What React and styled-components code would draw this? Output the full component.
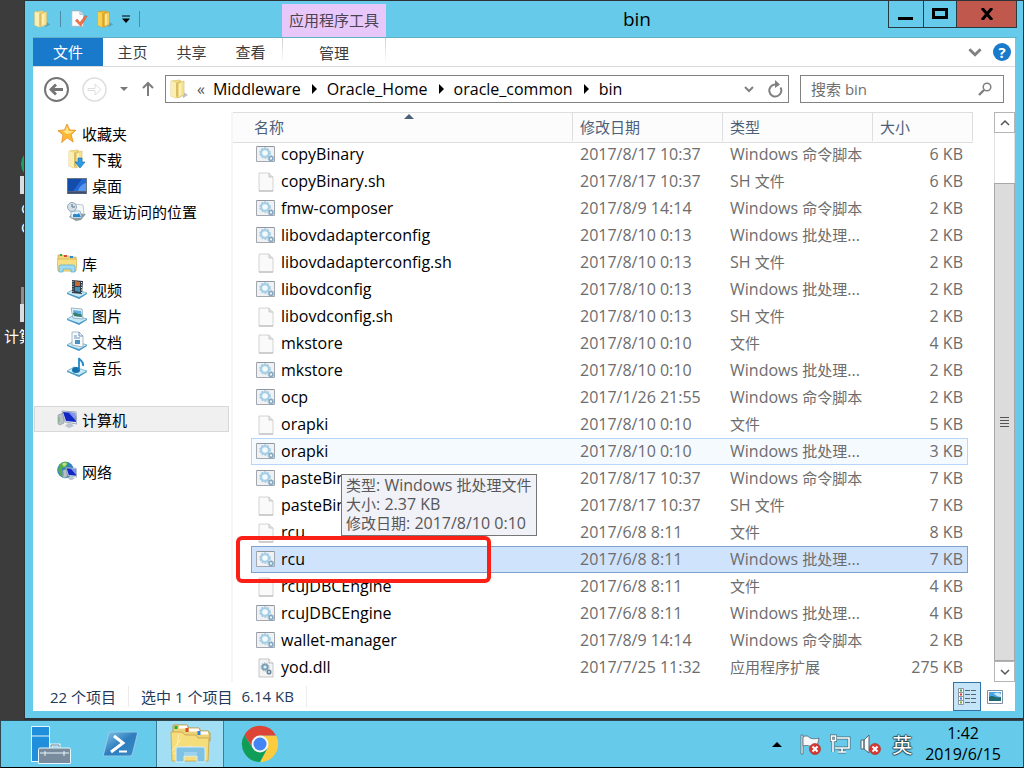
import React from "react";
import styled, { createGlobalStyle, css } from "styled-components";

const files = [
    ["copyBinary", "2017/8/17 10:37", "Windows 命令脚本", "6 KB", "script"],
    ["copyBinary.sh", "2017/8/17 10:37", "SH 文件", "6 KB", "file"],
    ["fmw-composer", "2017/8/9 14:14", "Windows 命令脚本", "2 KB", "script"],
    ["libovdadapterconfig", "2017/8/10 0:13", "Windows 批处理...", "2 KB", "script"],
    ["libovdadapterconfig.sh", "2017/8/10 0:13", "SH 文件", "2 KB", "file"],
    ["libovdconfig", "2017/8/10 0:13", "Windows 批处理...", "2 KB", "script"],
    ["libovdconfig.sh", "2017/8/10 0:13", "SH 文件", "2 KB", "file"],
    ["mkstore", "2017/8/10 0:10", "文件", "4 KB", "file"],
    ["mkstore", "2017/8/10 0:10", "Windows 批处理...", "2 KB", "script"],
    ["ocp", "2017/1/26 21:55", "Windows 命令脚本", "2 KB", "script"],
    ["orapki", "2017/8/10 0:10", "文件", "5 KB", "file"],
    ["orapki", "2017/8/10 0:10", "Windows 批处理...", "3 KB", "script", "hover"],
    ["pasteBinary", "2017/8/17 10:37", "Windows 命令脚本", "7 KB", "script"],
    ["pasteBinary.sh", "2017/8/17 10:37", "SH 文件", "7 KB", "file"],
    ["rcu", "2017/6/8 8:11", "文件", "8 KB", "file"],
    ["rcu", "2017/6/8 8:11", "Windows 批处理...", "7 KB", "script", "selected"],
    ["rcuJDBCEngine", "2017/6/8 8:11", "文件", "4 KB", "file"],
    ["rcuJDBCEngine", "2017/6/8 8:11", "Windows 批处理...", "4 KB", "script"],
    ["wallet-manager", "2017/8/9 14:14", "Windows 命令脚本", "2 KB", "script"],
    ["yod.dll", "2017/7/25 11:32", "应用程序扩展", "275 KB", "dll"],
];

const places = [
    { name: "收藏夹", icon: "star", items: [["下载", "download"], ["桌面", "desktop"], ["最近访问的位置", "recent"]] },
    { name: "库", icon: "library", items: [["视频", "video"], ["图片", "picture"], ["文档", "document"], ["音乐", "music"]] },
    { name: "计算机", icon: "computer", items: [], active: true },
    { name: "网络", icon: "network", items: [] },
];

const crumbs = ["Middleware", "Oracle_Home", "oracle_common", "bin"];

// Chinese runs are set one pixel smaller than the Latin text beside them
function Mixed({ children }) {
    return children
        .split(/([\u4e00-\u9fff]+)/)
        .map((part, i) => (i % 2 ? <Han key={i}>{part}</Han> : part));
}

function FolderArt({ shadow = true, strong }) {
    return (
        <>
            {shadow && <path d="M13 12l6 4-5 3z" fill="#506070" opacity=".4" />}
            <path d="M2 2l9-1 1 1v15l-5 2-5-2z" fill={strong ? "#f0bd35" : "#f3dd8b"} stroke={strong ? "#d19a1c" : "#dcc069"} strokeWidth=".7" />
            <path d="M2 2l5 2v15l-5-2z" fill={strong ? "#f7d154" : "#faeeb2"} />
            <path d="M7 4l4-2v14l-4 2z" fill={strong ? "#dba92d" : "#d9bd66"} />
            <path d="M9 4l6-2v14l-6 3z" fill={strong ? "#f5cd58" : "#f6e294"} stroke={strong ? "#d19a1c" : "#dcc069"} strokeWidth=".7" />
            <path d="M10 5l2-1v12l-2 1z" fill="#fff6bf" opacity=".7" />
        </>
    );
}

const TrayArt = ({ children }) => (
    <>
        <path d="M0 14l7-4 13 4-8 5z" fill="#c6e9f8" stroke="#69acd0" strokeWidth=".8" />
        <path d="M0 14v1l12 5 8-5v-1l-8 4z" fill="#4c9ac4" />
        {children}
    </>
);

const Monitor = () => (
    <>
        <path d="M1 6l5-2 1 10-4 2-2-1z" fill="#b6bfc4" stroke="#89939a" strokeWidth=".6" />
        <path d="M2 8v5" stroke="#72b55f" />
        <path d="M5 2l14 1 1 12-12-2z" fill="#e4eaf0" stroke="#8c98a8" strokeWidth=".8" />
        <path d="M6 3l12 1 1 9-10-1z" fill="#1226c4" />
        <path d="M12 4l6 0 1 8z" fill="#7e96ef" />
        <path d="M11 14l4 1 2 2-5 2-4-2z" fill="#bcc5ce" />
    </>
);

const art = {
    star: (
        <>
            <path d="M10 1l2.8 6 6 .3-4.600 4.300 2 7.500-6-4.300-5.500 4.700 1.300-7.800L1 7.700l6.500-.8z" fill="#fdb933" stroke="#e98a22" strokeWidth=".8" />
            <path d="M10 3l1.600 5 5 .3-6 3-5-3.200 3-.6z" fill="#ffe88c" />
        </>
    ),
    download: (
        <>
            <FolderArt shadow={false} />
            <path d="M11 9h4v4h3l-5 6-5-6h3z" fill="#2d9be4" stroke="#1975bb" strokeWidth=".7" />
        </>
    ),
    desktop: (
        <>
            <path d="M0 3h20v16H0z" fill="#687584" />
            <path d="M1 4h18v12H1z" fill="#2367d2" />
            <path d="M1 4h14L6 16H1z" fill="#144cac" />
            <path d="M11 16c1-4 4-7 8-8v8z" fill="#5797ef" />
            <path d="M1 17.500h18" stroke="#3c4d70" strokeWidth="2" />
        </>
    ),
    recent: (
        <>
            <path d="M2 16l4-4 13 1-5 6-5 1z" fill="#8e989e" />
            <path d="M8 3l8 1 1 9-9-1z" fill="#f4f7f9" stroke="#b1bdc7" strokeWidth=".8" />
            <path d="M4 10l9 0 2 7H4z" fill="#e7f2fa" stroke="#8ca6b6" strokeWidth=".8" />
            <path d="M6 14c2-3 3 1 6-2l2 4H6z" fill="#2488cb" />
            <circle cx="5" cy="6" r="4.500" fill="#d3dee7" stroke="#97aaba" />
            <path d="M5 3v3h3" stroke="#5a7184" fill="none" />
        </>
    ),
    library: (
        <>
            <path d="M1 4V2h5l1 1h5l1 1h6v4H1z" fill="#efd57d" stroke="#c2a042" strokeWidth=".6" />
            <path d="M3 2h2" stroke="#31a64b" strokeWidth="2" />
            <path d="M7 3h3" stroke="#d84b38" strokeWidth="2" />
            <path d="M13 4h3" stroke="#3087d2" strokeWidth="2" />
            <path d="M0 6h20l-1 12H1z" fill="#f6df82" stroke="#d4b552" strokeWidth=".8" />
            <path d="M2 19v-5q0-2 2-2h12q2 0 2 2v5h-4v-3H6v3z" fill="#a1dbf3" stroke="#55a9d2" strokeWidth=".7" />
        </>
    ),
    video: (
        <TrayArt>
            <path d="M5 1l11 1-1 13-10-1z" fill="#313d46" />
            <path d="M8 2l5 1v4H8z" fill="#c56b37" />
            <path d="M8 8l5 0v5l-5-1z" fill="#4592bd" />
            <path d="M6 2v11M14.500 3v11" stroke="#dce8ed" strokeDasharray="1 1.500" />
        </TrayArt>
    ),
    picture: (
        <TrayArt>
            <path d="M4 3l11 1 1 10-10-1z" fill="#eaf3f8" stroke="#83a7bb" strokeWidth=".8" />
            <path d="M6 5l8 1 1 6-8-1z" fill="#5eaee4" />
            <path d="M6 8c3-2 4 2 8 1l1 3-8-1z" fill="#357f6a" />
        </TrayArt>
    ),
    document: (
        <TrayArt>
            <path d="M5 1h7l4 4v11L5 14z" fill="#f7fafd" stroke="#9ba9b6" strokeWidth=".8" />
            <path d="M12 1v4h4M7 5h3M7 7h6" stroke="#6d91bb" fill="none" />
            <path d="M8 9l5 0v4H8z" fill="#4a91c8" />
        </TrayArt>
    ),
    music: (
        <TrayArt>
            <ellipse cx="9" cy="13" rx="4" ry="3" fill="#1670ab" />
            <path d="M12 13V1c1 3 5 3 4 8" stroke="#2589c7" strokeWidth="1.800" fill="none" />
        </TrayArt>
    ),
    computer: <Monitor />,
    network: (
        <>
            <circle cx="8.500" cy="9" r="8.300" fill="#3286bf" />
            <path d="M2 5c3-5 7-5 9-3L9 6l-4 1v5l2 4C3 15 0 10 2 5z" fill="#54ad45" />
            <path d="M5 3c2-2 4-1 5 0L7 6z" fill="#bbe18a" />
            <g transform="translate(5 5) scale(.75)">
                <Monitor />
            </g>
        </>
    ),
    folder: <FolderArt />,
    newFolder: <FolderArt strong />,
    properties: (
        <>
            <path d="M2 1h9l4 4v13H2z" fill="#fbfcfd" stroke="#a7b0b8" strokeWidth=".8" />
            <path d="M11 1v4h4" fill="#dce3e8" stroke="#a7b0b8" strokeWidth=".8" />
            <path d="M6 12l2-2 3 4 6-8 2 1-7 11z" fill="#ee7147" stroke="#c94b2b" strokeWidth=".5" />
        </>
    ),
    file: (
        <>
            <path d="M3 1h10l4 4v14H3z" fill="#fafafa" stroke="#c9c9c9" strokeWidth=".8" />
            <path d="M13 1v4h4" fill="#e6e6e6" stroke="#bcbcbc" strokeWidth=".8" />
            <path d="M3 19h14" stroke="#b4b4b4" />
        </>
    ),
    script: (
        <>
            <path d="M.5 1.500h18v15H.5z" fill="#f0f1f4" stroke="#a3a8ae" strokeWidth="1" />
            <path d="M1 1.500h17" stroke="#8f969d" />
            <circle cx="9" cy="8" r="3.800" fill="#f3fafd" stroke="#a3cfe6" strokeWidth="2" />
            <circle cx="9" cy="8" r="5.200" fill="none" stroke="#86b9d6" strokeWidth="1" strokeDasharray="1.800 1.500" />
            <circle cx="15" cy="13.500" r="1.900" fill="#e8f6fc" stroke="#84a8c3" strokeWidth="1.500" />
            <circle cx="15" cy="13.500" r="3" fill="none" stroke="#84a8c3" strokeWidth=".8" strokeDasharray="1 1" />
        </>
    ),
    dll: (
        <>
            <path d="M3 1h10l4 4v14H3z" fill="#f4f4f4" stroke="#b9b9b9" strokeWidth=".8" />
            <path d="M13 1v4h4" fill="#fff" stroke="#aaa" strokeWidth=".8" />
            <circle cx="9" cy="9" r="2.600" fill="#e4f2f8" stroke="#7c9fb8" strokeWidth="2" />
            <circle cx="9" cy="9" r="4" fill="none" stroke="#7c9fb8" strokeDasharray="1.300 1.200" />
            <circle cx="13" cy="14" r="1.800" fill="#d8e6ee" stroke="#6a859c" strokeWidth="1.500" />
        </>
    ),
};

function Icon({ name, size = 20 }) {
    return (
        <svg width={size} height={size} viewBox="0 0 20 20" aria-hidden="true">
            {art[name]}
        </svg>
    );
}

const Chevron = ({ up, size = 10, width = 2 }) => (
    <svg width={size} height={size} viewBox="0 0 10 10" fill="none" stroke="currentColor" strokeWidth={width} aria-hidden="true">
        <path d={up ? "M1 7l4-4 4 4" : "M1 3l4 4 4-4"} />
    </svg>
);

const Caret = ({ right, up, color = "currentColor" }) => (
    <svg width="10" height="10" viewBox="0 0 10 10" fill={color} aria-hidden="true">
        <path d={right ? "M3 0l5 5-5 5z" : up ? "M0 8l5-5 5 5z" : "M1 3h8L5 7z"} />
    </svg>
);

const Cross = () => (
    <>
        <circle cx="15" cy="15" r="5.500" fill="#d83a32" stroke="#a92822" strokeWidth=".6" />
        <path d="M12.500 12.500l5 5M17.500 12.500l-5 5" stroke="#fff" strokeWidth="2" />
    </>
);

function TitleBar() {
    return (
        <TitleRow>
            <QuickAccess>
                <Icon name="folder" size={18} />
                <Divider />
                <ToolButton aria-label="属性"><Icon name="properties" size={18} /></ToolButton>
                <ToolButton aria-label="新建文件夹"><Icon name="newFolder" size={18} /></ToolButton>
                <ToolButton aria-label="自定义快速访问工具栏">
                    <svg width="8" height="8" viewBox="0 0 8 8">
                        <path d="M0 1h8" stroke="#000" />
                        <path d="M0 3.500h8L4 8z" fill="#000" />
                    </svg>
                </ToolButton>
                <Divider />
            </QuickAccess>
            <ContextTitle>应用程序工具</ContextTitle>
            <Title>bin</Title>
            <WindowButton aria-label="最小化" $width={36}>
                <svg width="16" height="14"><path d="M0 11.500h15" stroke="#000" strokeWidth="3" /></svg>
            </WindowButton>
            <WindowButton aria-label="最大化" $width={33}>
                <svg width="16" height="14"><path d="M1.500 2.500h13v8h-13z" stroke="#000" strokeWidth="3" fill="none" /></svg>
            </WindowButton>
            <WindowButton aria-label="关闭" $width={60} $close>
                <svg width="14" height="12"><path d="M2 0l10 12M12 0L2 12" stroke="#000" strokeWidth="3" /></svg>
            </WindowButton>
        </TitleRow>
    );
}

function Ribbon() {
    return (
        <RibbonRow>
            <FileTab>文件</FileTab>
            <Tab>主页</Tab>
            <Tab>共享</Tab>
            <Tab>查看</Tab>
            <ContextTab>管理</ContextTab>
            <RibbonEnd>
                <ToolButton aria-label="展开功能区"><Chevron size={14} width={2} /></ToolButton>
                <Help aria-label="帮助">?</Help>
            </RibbonEnd>
        </RibbonRow>
    );
}

function AddressRow() {
    return (
        <Address>
            <ToolButton aria-label="后退">
                <svg width="27" height="27" viewBox="0 0 27 27" fill="none" stroke="#757575" strokeWidth="2">
                    <circle cx="13.500" cy="13.500" r="11.500" />
                    <path d="M20 13.500H9M13 8.500l-5 5 5 5" strokeWidth="2.800" />
                </svg>
            </ToolButton>
            <ToolButton aria-label="前进">
                <svg width="27" height="27" viewBox="0 0 27 27" fill="none" stroke="#dedede" strokeWidth="1.500">
                    <circle cx="13.500" cy="13.500" r="11.500" />
                    <path d="M7 12.500h7V8l6 5.500-6 5.500v-4.500H7z" strokeWidth="1" />
                </svg>
            </ToolButton>
            <ToolButton aria-label="最近浏览的位置"><Caret color="#777" /></ToolButton>
            <ToolButton aria-label="上移">
                <svg width="14" height="16" viewBox="0 0 14 16" fill="none" stroke="#7d7d7d" strokeWidth="2">
                    <path d="M8 15V2M3 7l5-5 5 5" />
                </svg>
            </ToolButton>
            <PathBox>
                <Icon name="folder" />
                <Overflow>«</Overflow>
                {crumbs.map((crumb, i) => (
                    <React.Fragment key={crumb}>
                        {i > 0 && <Caret right color="#000" />}
                        <Crumb href="#">{crumb}</Crumb>
                    </React.Fragment>
                ))}
                <PathEnd>
                    <ToolButton aria-label="以前的位置"><Chevron /></ToolButton>
                    <ToolButton aria-label="刷新">
                        <svg width="16" height="18" viewBox="0 0 16 18" fill="none" stroke="#808080" strokeWidth="2">
                            <path d="M13.500 7.500a6 6 0 1 1-5.500-3" />
                            <path d="M8 0l5 4.500L8 8z" fill="#808080" stroke="none" />
                        </svg>
                    </ToolButton>
                </PathEnd>
            </PathBox>
            <SearchBox>
                <SearchInput aria-label="搜索 bin" placeholder="搜索 bin" />
                <svg width="14" height="14" viewBox="0 0 14 14" fill="none" stroke="#808080">
                    <circle cx="9" cy="5" r="3.800" strokeWidth="1.500" />
                    <path d="M6 8l-5 5" strokeWidth="2.400" />
                </svg>
            </SearchBox>
        </Address>
    );
}

function Sidebar() {
    return (
        <SideNav>
            {places.map((group) => (
                <Group key={group.name}>
                    <Place href="#" $active={group.active}>
                        <Icon name={group.icon} />
                        {group.name}
                    </Place>
                    {group.items.map(([name, icon]) => (
                        <Place key={name} href="#" $child>
                            <Icon name={icon} />
                            {name}
                        </Place>
                    ))}
                </Group>
            ))}
        </SideNav>
    );
}

function FileList() {
    return (
        <Table>
            <thead>
                <HeadRow>
                    <Head>
                        名称
                        <SortMark><Caret up color="#4c607a" /></SortMark>
                    </Head>
                    <Head>修改日期</Head>
                    <Head>类型</Head>
                    <Head>大小</Head>
                </HeadRow>
            </thead>
            <tbody>
                {files.map(([name, date, type, size, icon, state], i) => (
                    <Row key={i} $state={state}>
                        <NameCell>
                            <Icon name={icon} />
                            {name}
                            {state === "hover" && (
                                <Tooltip role="tooltip">
                                    <div><Mixed>类型: Windows 批处理文件</Mixed></div>
                                    <div><Mixed>大小: 2.37 KB</Mixed></div>
                                    <div><Mixed>修改日期: 2017/8/10 0:10</Mixed></div>
                                </Tooltip>
                            )}
                            {state === "selected" && <Marker />}
                        </NameCell>
                        <Cell>{date}</Cell>
                        <Cell><Mixed>{type}</Mixed></Cell>
                        <SizeCell>{size}</SizeCell>
                    </Row>
                ))}
            </tbody>
        </Table>
    );
}

function ScrollBar() {
    return (
        <Scroll>
            <ScrollButton aria-label="向上滚动"><Chevron up width={1.5} /></ScrollButton>
            <Thumb>
                <svg width="9" height="10"><path d="M0 .5h9M0 3.500h9M0 6.500h9M0 9.500h9" stroke="#555" /></svg>
            </Thumb>
            <ScrollButton aria-label="向下滚动"><Chevron width={1.5} /></ScrollButton>
        </Scroll>
    );
}

function StatusBar() {
    return (
        <Status>
            <StatusText>
                <span><Mixed>22 个项目</Mixed></span>
            </StatusText>
            <StatusText>
                <span><Mixed>选中 1 个项目</Mixed></span>
                <span>6.14 KB</span>
            </StatusText>
            <Views>
                <ViewButton aria-label="详细信息" $on>
                    <svg width="20" height="18">
                        <path d="M1.500.5h5v16h-5zM1.500 4.500h5M1.500 8.500h5M1.500 12.500h5" fill="#fff" stroke="#8a97a3" />
                        <path d="M3 2.500h2" stroke="#3b9a4b" strokeWidth="2" />
                        <path d="M3 6.500h2" stroke="#d33" strokeWidth="2" />
                        <path d="M3 10.500h2" stroke="#3678d8" strokeWidth="2" />
                        <path d="M3 14.500h2" stroke="#78a92d" strokeWidth="2" />
                        <path d="M8 2.500h11M8 6.500h11M8 10.500h11M8 14.500h11" stroke="#4f6475" strokeDasharray="5 1" />
                    </svg>
                </ViewButton>
                <ViewButton aria-label="大缩略图">
                    <svg width="16" height="14">
                        <path d="M.5.5h15v13H.5z" fill="#fff" stroke="#7c8fa0" />
                        <path d="M2 2h12v9H2z" fill="#4aa4e6" />
                        <path d="M2 7c4-3 7 2 12 0v4H2z" fill="#1f6b70" />
                        <path d="M7 4c2-2 5-1 7 0v3c-3 0-5-2-7-3z" fill="#c9e9fb" />
                    </svg>
                </ViewButton>
            </Views>
        </Status>
    );
}

function Taskbar() {
    return (
        <Bar>
            <Task aria-label="服务器管理器">
                <svg width="42" height="42" viewBox="0 0 42 42" stroke="#e8f6fd">
                    <path d="M2.500 3.500h18v35h-18z" fill="#1f8fdc" />
                    <path d="M2.500 13h18" />
                    <path d="M22 26v-4h8v4" fill="none" stroke="#e8f6fd" strokeWidth="3" />
                    <path d="M22 26v-4h8v4" fill="none" stroke="#6f8793" />
                    <path d="M9.500 26.500q0-1.500 1.500-1.500h29q1.500 0 1.500 1.500v14h-32z" fill="#788c9e" />
                    <path d="M11 30h29M16 28v5M35 28v5" />
                </svg>
            </Task>
            <Task aria-label="PowerShell">
                <svg width="38" height="30" viewBox="0 0 38 30">
                    <defs>
                        <linearGradient id="ps" x1="0" y1="0" x2="1" y2="1">
                            <stop offset="0" stopColor="#86c7e8" />
                            <stop offset=".5" stopColor="#2e7dbd" />
                            <stop offset="1" stopColor="#3a8ac8" />
                        </linearGradient>
                    </defs>
                    <path d="M9 3h26q2 0 1.500 2l-5 20q-.5 2-2.500 2H4q-2 0-1.500-2l5-20q.5-2 2.500-2z" fill="url(#ps)" stroke="#8cc9ea" strokeWidth="1.200" />
                    <path d="M13 7l9 7-12 9" fill="none" stroke="#fff" strokeWidth="3" />
                    <path d="M18 22.500h8" stroke="#fff" strokeWidth="2" />
                </svg>
            </Task>
            <Task aria-label="文件资源管理器" $on>
                <svg width="42" height="40" viewBox="0 0 42 40">
                    <path d="M4 12V2q0-1 1-1h13l2 3h10l2 3h7l2 2v8z" fill="#ecd277" stroke="#b99a49" />
                    <path d="M10 3h8M20 6h10M31 9h8" stroke="#fff" strokeWidth="3" />
                    <path d="M7 2v3" stroke="#28a745" strokeWidth="3" />
                    <path d="M18 4v4" stroke="#de4a2c" strokeWidth="3" />
                    <path d="M30 7v4" stroke="#2f83d6" strokeWidth="3" />
                    <path d="M2 8h11l3 3h11l2 3h11l-1 23H3z" fill="#f6dd7b" stroke="#cfae55" />
                    <path d="M3 27l9-12M4 30l18-8M8 22l2-12" stroke="#fff6c4" opacity=".8" />
                    <path d="M7 38V25q0-2 2-2h25q2 0 2 2v13h-8v-6H15v6z" fill="#7fc2e4" stroke="#d6effa" />
                    <path d="M15 32h13v-4H15z" fill="#a8d9ef" opacity=".7" />
                </svg>
            </Task>
            <Task aria-label="Google Chrome">
                <svg width="38" height="38" viewBox="0 0 38 38">
                    <path d="M19 10.500h16A18 18 0 0 1 19 37l7.500-14z" fill="#fdcb3e" />
                    <path d="M12 23.500L3.400 10A18 18 0 0 0 19 37l7-13z" fill="#109d58" />
                    <path d="M19 10.500h16A18 18 0 0 0 3.400 10l8.500 13z" fill="#dc4437" />
                    <circle cx="19" cy="19" r="8.500" fill="#f1f5f5" />
                    <circle cx="19" cy="19" r="6.500" fill="#4385f4" />
                </svg>
            </Task>
            <Notify>
                <HiddenIcons aria-label="显示隐藏的图标"><Caret up color="#000" /></HiddenIcons>
                <svg width="21" height="21" viewBox="0 0 21 21">
                    <path d="M1 1h2v19H1z" fill="#fff" stroke="#56656d" strokeWidth=".8" />
                    <path d="M3 3c3-2 5-1 7 1 3 1 6 1 9 0l-2 9c-5 1-9-3-14-1z" fill="#f4f8fa" stroke="#56656d" strokeWidth=".8" />
                    <Cross />
                </svg>
                <svg width="21" height="21" viewBox="0 0 21 21" fill="none">
                    <path d="M7 4h12v10H5M12 14v4M8 18h8M3 6v12M1.500 2h4v4.500h-4z" stroke="#4b6b78" strokeWidth="3" />
                    <path d="M7 4h12v10H5M12 14v4M8 18h8M3 6v12M1.500 2h4v4.500h-4z" stroke="#fff" strokeWidth="1.600" />
                </svg>
                <svg width="21" height="21" viewBox="0 0 21 21">
                    <path d="M1 6h3v9H1zM4 6l5-5v18l-5-4z" fill="#f8fafb" stroke="#56656d" />
                    <Cross />
                </svg>
                <InputMode>英</InputMode>
                <Clock>
                    <span>1:42</span>
                    <span>2019/6/15</span>
                </Clock>
            </Notify>
        </Bar>
    );
}

function DesktopEdge() {
    return (
        <Edge>
            <Shortcut>
                <svg width="24" height="60" viewBox="0 0 24 60">
                    <circle cx="36" cy="25" r="15" fill="#18a261" />
                    <path d="M20 37h4v18h-4z" fill="#d9dde2" />
                </svg>
                <ShortcutName $indent={21}>Google Chrome</ShortcutName>
            </Shortcut>
            <Shortcut>
                <svg width="24" height="60" viewBox="0 0 24 60">
                    <path d="M21 20h3v17h-3z" fill="#8a8d8b" />
                    <path d="M20 37h4v18h-4z" fill="#d9dde2" />
                </svg>
                <ShortcutName $indent={4}>计算机</ShortcutName>
            </Shortcut>
        </Edge>
    );
}

function App() {
    return (
        <Desktop>
            <GlobalStyle />
            <Workspace>
                <DesktopEdge />
                <Window>
                    <TitleBar />
                    <Body>
                        <Ribbon />
                        <AddressRow />
                        <Panes>
                            <Sidebar />
                            <FileList />
                            <ScrollBar />
                        </Panes>
                        <StatusBar />
                    </Body>
                </Window>
            </Workspace>
            <Taskbar />
        </Desktop>
    );
}

export default App;

const GlobalStyle = createGlobalStyle`
    * {
        box-sizing: border-box;
    }
    body {
        margin: 0;
        background: #3c3c3c;
        font-family: "Open Sans", "Noto Sans CJK SC", sans-serif;
        font-size: 15px;
    }
    button,
    input {
        font: inherit;
    }
    svg {
        flex: none;
        display: block;
    }
`;

const Han = styled.span`
    font-size: 15px;
`;
const Desktop = styled.div`
    min-height: 100vh;
    display: flex;
    flex-direction: column;
    overflow: hidden;
`;
const Workspace = styled.div`
    flex: 1;
    display: flex;
`;
const Edge = styled.div`
    width: 24px;
    padding-top: 139px;
    display: flex;
    flex-direction: column;
    gap: 30px;
    overflow: hidden;
    color: #fff;
`;
const Shortcut = styled.div`
    display: flex;
    flex-direction: column;
`;
const ShortcutName = styled.span`
    width: 64px;
    padding-left: ${(props) => props.$indent}px;
    line-height: 19px;
`;
const Window = styled.main`
    flex: 1;
    min-width: 0;
    padding: 0 8px;
    display: flex;
    flex-direction: column;
    background: #66caea;
    border: 1px solid #2f3335;
    border-bottom-width: 2px;
`;
const TitleRow = styled.header`
    height: 37px;
    margin-right: -2px;
    display: flex;
    align-items: flex-start;
    border-bottom: 1px solid #64afc8;
`;
const QuickAccess = styled.div`
    width: 249px;
    height: 36px;
    display: flex;
    align-items: center;
    gap: 8px;
`;
const Divider = styled.span`
    width: 1px;
    height: 16px;
    margin: 0 1px;
    background: #4d8ca4;
`;
const ToolButton = styled.button`
    display: flex;
    padding: 0;
    border: 0;
    background: none;
    color: #808080;
`;
const ContextTitle = styled.div`
    width: 104px;
    height: 33px;
    margin-top: 3px;
    background: #e8c8fa;
    color: #4a4350;
    line-height: 32px;
    text-align: center;
`;
const Title = styled.h1`
    flex: 1;
    margin: 0;
    text-align: center;
    font-size: 19px;
    font-weight: 400;
    line-height: 36px;
`;
const WindowButton = styled.button`
    width: ${(props) => props.$width}px;
    height: 27px;
    padding: 0;
    display: flex;
    align-items: center;
    justify-content: center;
    background: ${(props) => (props.$close ? "#c1584d" : "none")};
    border: solid #263a42;
    border-width: 0 1px 1px 0;
    &:nth-of-type(1) {
        border-left-width: 1px;
    }
`;
const Body = styled.div`
    flex: 1;
    display: flex;
    flex-direction: column;
    margin-bottom: 7px;
    background: #fff;
`;
const RibbonRow = styled.nav`
    height: 29px;
    display: flex;
    border-bottom: 1px solid #dadbdc;
`;
const Tab = styled.button`
    width: 59px;
    padding: 0 0 2px;
    border: 0;
    background: none;
    color: #3c3c3c;
`;
const FileTab = styled(Tab)`
    width: 70px;
    background: #1979ca;
    color: #fff;
`;
const ContextTab = styled(Tab)`
    width: 104px;
    height: 24px;
    margin-left: 2px;
    padding-top: 4px;
    border: solid;
    border-width: 0 1px;
    border-image: linear-gradient(#c8cdd0, #fff) 1;
`;
const RibbonEnd = styled.div`
    margin-left: auto;
    padding-right: 4px;
    display: flex;
    align-items: center;
    gap: 11px;
`;
const Help = styled.button`
    width: 18px;
    height: 18px;
    padding: 0;
    border: 0;
    border-radius: 50%;
    background: #1979ca;
    color: #fff;
    font-weight: 700;
    line-height: 18px;
`;
const Address = styled.div`
    padding: 8px 11px 9px 10px;
    display: flex;
    align-items: center;
    gap: 11px;
`;
const PathBox = styled.div`
    flex: 1;
    height: 28px;
    padding: 0 5px 0 3px;
    display: flex;
    align-items: center;
    gap: 8px;
    border: 1px solid #828282;
    font-size: 16px;
`;
const Overflow = styled.span`
    color: #555;
`;
const Crumb = styled.a`
    color: #000;
    text-decoration: none;
`;
const PathEnd = styled.div`
    margin-left: auto;
    display: flex;
    align-items: center;
    gap: 13px;
`;
const SearchBox = styled.label`
    width: 204px;
    height: 28px;
    padding: 0 11px 0 10px;
    display: flex;
    align-items: center;
    border: 1px solid #828282;
`;
const SearchInput = styled.input`
    flex: 1;
    min-width: 0;
    padding: 0;
    border: 0;
    outline: 0;
    &::placeholder {
        color: #6f6f6f;
    }
`;
const Panes = styled.div`
    flex: 1;
    display: flex;
`;
const SideNav = styled.nav`
    width: 200px;
    padding: 8px 2px 0 1px;
    display: flex;
    flex-direction: column;
    gap: 26px;
    border-right: 2px solid #f5f5f5;
`;
const Group = styled.div`
    display: flex;
    flex-direction: column;
`;
const Place = styled.a`
    height: 26px;
    padding-left: ${(props) => (props.$child ? 32 : 22)}px;
    display: flex;
    align-items: center;
    gap: 5px;
    border: 1px solid ${(props) => (props.$active ? "#d8d8d8" : "transparent")};
    background: ${(props) => (props.$active ? "#f0f0f0" : "none")};
    color: #000;
    text-decoration: none;
    white-space: nowrap;
`;
const Table = styled.table`
    flex: 1;
    min-width: 0;
    padding-right: 21px;
    display: block;
    font-size: 16px;
    thead,
    tbody {
        display: block;
    }
`;
const HeadRow = styled.tr`
    display: grid;
    grid-template-columns: minmax(0, 1fr) 150px 150px 100px;
    box-shadow: 0 1px #fcfcfc, 0 2px #dedede;
`;
const Head = styled.th`
    position: relative;
    height: 29px;
    padding: 0 0 0 7px;
    border-top: 1px solid #dedede;
    border-right: 1px solid #dedede;
    background: #fcfcfc;
    color: #4c607a;
    font-size: 15px;
    font-weight: 400;
    line-height: 28px;
    text-align: left;
    &:first-child {
        padding-left: 21px;
    }
`;
const SortMark = styled.span`
    position: absolute;
    top: -2px;
    right: 158px;
`;
const rowStates = {
    hover: css`
        background: #f5faff;
        border-color: #b8d6fb;
    `,
    selected: css`
        background: #cfe3fd;
        border-color: #7da2ce;
    `,
};
const Row = styled.tr`
    height: 27px;
    margin: 0 5px 0 18px;
    display: grid;
    grid-template-columns: minmax(0, 1fr) 150px 150px 94px;
    align-items: center;
    border: 1px solid transparent;
    ${(props) => rowStates[props.$state]}
`;
const Cell = styled.td`
    padding: 0 0 0 7px;
    color: #6d6d6d;
    line-height: 25px;
    white-space: nowrap;
`;
const SizeCell = styled(Cell)`
    padding-right: 4px;
    text-align: right;
`;
const NameCell = styled(Cell)`
    position: relative;
    padding-left: 4px;
    display: flex;
    align-items: center;
    gap: 5px;
    color: #000;
`;
const Tooltip = styled.div`
    position: absolute;
    z-index: 1;
    top: 35px;
    left: 89px;
    padding: 1px 4px 2px;
    border: 1px solid #767676;
    background: #f1f1f8;
    color: #575757;
    line-height: 19px;
`;
const Marker = styled.span`
    position: absolute;
    z-index: 2;
    top: -11px;
    left: -16px;
    width: 255px;
    height: 47px;
    border: 4px solid #fb2015;
    border-radius: 6px;
`;
const Scroll = styled.div`
    width: 21px;
    display: flex;
    flex-direction: column;
    border: solid #e2e2e2;
    border-width: 0 1px;
`;
const ScrollButton = styled.button`
    height: 21px;
    margin: 0 -1px;
    padding: 0;
    display: flex;
    align-items: center;
    justify-content: center;
    border: 1px solid #b5b5b5;
    background: #fff;
    color: #555;
`;
const Thumb = styled.div`
    flex: 1;
    margin: 50px -1px 0;
    display: flex;
    align-items: center;
    justify-content: center;
    border: 1px solid #a8a8a8;
    background: #dcdcdc;
`;
const Status = styled.footer`
    height: 29px;
    padding-left: 17px;
    display: flex;
    align-items: center;
    color: #1e395b;
`;
const StatusText = styled.div`
    padding-right: 12px;
    margin-right: 12px;
    display: flex;
    gap: 9px;
    border-right: 1px solid #ececec;
`;
const Views = styled.div`
    align-self: stretch;
    margin-left: auto;
    padding-right: 6px;
    display: flex;
`;
const ViewButton = styled.button`
    width: 28px;
    padding: 0;
    display: flex;
    align-items: center;
    justify-content: center;
    border: 1px solid ${(props) => (props.$on ? "#2f73a8" : "transparent")};
    background: ${(props) => (props.$on ? "#c6e4f7" : "none")};
`;
const Bar = styled.footer`
    height: 48px;
    padding-left: 15px;
    display: flex;
    gap: 2px;
    background: #66caea;
    border: 1px solid #2d4853;
    border-bottom-color: #000;
`;
const Task = styled.button`
    width: 68px;
    padding: 0;
    display: flex;
    align-items: center;
    justify-content: center;
    border: solid ${(props) => (props.$on ? "#3a7f98" : "transparent")};
    border-width: 0 1px;
    background: ${(props) => (props.$on ? "#a2def4" : "none")};
`;
const Notify = styled.div`
    margin-left: auto;
    padding-right: 22px;
    display: flex;
    align-items: center;
    gap: 9px;
`;
const HiddenIcons = styled(ToolButton)`
    margin-right: 9px;
`;
const InputMode = styled.span`
    margin-right: 4px;
    margin-left: 2px;
    font-size: 20px;
    color: #fff;
    text-shadow: 1px 0 1px #2c4a56, -1px 0 1px #2c4a56, 0 1px 1px #2c4a56, 0 -1px 1px #2c4a56;
`;
const Clock = styled.time`
    display: flex;
    flex-direction: column;
    align-items: center;
    font-size: 16px;
    line-height: 21px;
`;
